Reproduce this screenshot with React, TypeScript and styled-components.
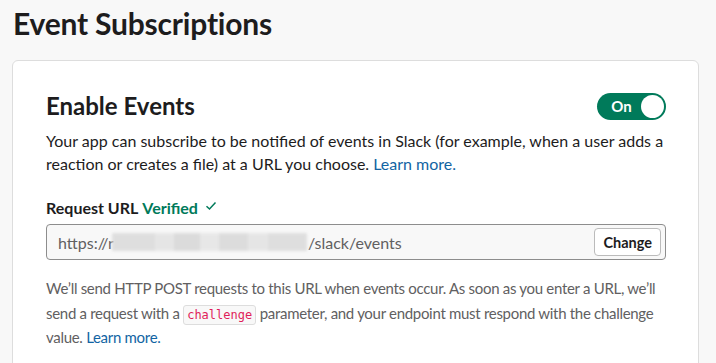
import React from "react";
import styled, { createGlobalStyle } from "styled-components";

const Global = createGlobalStyle`
  html, body { margin: 0; padding: 0; background: #f8f8f8; }
  body { font-family: Lato, "Noto Sans", sans-serif; color: #1d1c1d; -webkit-font-smoothing: antialiased; }
`;

const Page = styled.div`
  padding: 0 17px 0 12px;
  width: 716px;
  box-sizing: border-box;
  height: 363px;
  overflow: hidden;
`;

const Title = styled.h1`
  margin: 0;
  padding: 3px 0 0 1px;
  font-size: 30px;
  line-height: 40px;
  font-weight: 700;
  letter-spacing: -0.2px;
  color: #1d1c1d;
`;

const Card = styled.section`
  margin-top: 17px;
  background: #fff;
  border: 1px solid #dddddd;
  border-radius: 6px;
  padding: 29px 32px 40px 33px;
`;

const HeaderRow = styled.div`
  display: flex;
  align-items: center;
  justify-content: space-between;
`;

const CardTitle = styled.h2`
  margin: 0;
  font-size: 24px;
  line-height: 32px;
  font-weight: 700;
`;

const Toggle = styled.div`
  width: 69px;
  height: 27px;
  border-radius: 14px;
  background: #007a5a;
  display: flex;
  align-items: center;
  box-sizing: border-box;
  padding: 0 2px 0 0;
`;

const ToggleLabel = styled.span`
  flex: 1;
  text-align: center;
  color: #fff;
  font-weight: 700;
  font-size: 15px;
  padding-left: 5px;
`;

const Knob = styled.span`
  width: 23px;
  height: 23px;
  border-radius: 50%;
  background: #fff;
`;

const Desc = styled.p`
  margin: 7px 0 0;
  font-size: 16px;
  line-height: 23px;
`;

const Link = styled.a`
  color: #1264a3;
  text-decoration: none;
`;

const Label = styled.div`
  margin-top: 23px;
  font-size: 16px;
  font-weight: 700;
  line-height: 20px;
  display: flex;
  align-items: center;
  gap: 4px;
`;

const Verified = styled.span`
  color: #007a5a;
`;

const Check = styled.svg`
  margin-left: 3px;
  margin-top: -5px;
`;

const UrlBox = styled.div`
  margin-top: 6px;
  height: 36px;
  box-sizing: border-box;
  border: 1px solid #8d8d8d;
  border-radius: 4px;
  background: #f8f8f8;
  display: flex;
  align-items: center;
  padding: 0 4px 0 11px;
`;

const UrlText = styled.span`
  flex: 1;
  display: flex;
  align-items: center;
  font-size: 16px;
  color: #616061;
`;

const Blur = styled.span`
  display: inline-block;
  width: 195px;
  height: 18px;
  margin: 0 1px 0 -2px;
  background:
    linear-gradient(90deg, #dcdcdc 0 22%, #e4e4e4 22% 32%, #d8d8d8 32% 45%, #e6e6e6 45% 55%, #dadada 55% 70%, #e4e4e4 70% 80%, #dcdcdc 80% 100%);
  filter: blur(1.5px);
  opacity: 0.9;
`;

const ChangeButton = styled.button`
  height: 28px;
  padding: 0 8px;
  border: 1px solid #bbbbbb;
  border-radius: 4px;
  background: #fff;
  font-family: inherit;
  font-weight: 700;
  font-size: 14.5px;
  color: #1d1c1d;
`;

const Help = styled.p`
  margin: 16px 0 0;
  font-size: 15px;
  letter-spacing: -0.3px;
  line-height: 24.5px;
  color: #616061;
`;

const Code = styled.code`
  display: inline-block;
  font-family: Monaco, Menlo, "DejaVu Sans Mono", monospace;
  font-size: 12px;
  letter-spacing: 0;
  line-height: 16px;
  color: #e01e5a;
  background: #f8f8f8;
  border: 1px solid #dddddd;
  border-radius: 3px;
  padding: 1px 3px;
`;

export default function App() {
  return (
    <>
      <Global />
      <Page>
        <Title>Event Subscriptions</Title>
        <Card>
          <HeaderRow>
            <CardTitle>Enable Events</CardTitle>
            <Toggle>
              <ToggleLabel>On</ToggleLabel>
              <Knob />
            </Toggle>
          </HeaderRow>
          <Desc>
            Your app can subscribe to be notified of events in Slack (for example, when a user adds a
            reaction or creates a file) at a URL you choose. <Link href="#">Learn more.</Link>
          </Desc>
          <Label>
            Request URL <Verified>Verified</Verified>
            <Check width="12" height="10" viewBox="0 0 12 10">
              <path d="M1.5 5.2 L4.5 8 L10.5 1.5" fill="none" stroke="#007a5a" strokeWidth="1.5" />
            </Check>
          </Label>
          <UrlBox>
            <UrlText>
              https://r<Blur />/slack/events
            </UrlText>
            <ChangeButton>Change</ChangeButton>
          </UrlBox>
          <Help>
            We’ll send HTTP POST requests to this URL when events occur. As soon as you enter a URL, we’ll
            send a request with a <Code>challenge</Code> parameter, and your endpoint must respond with the challenge
            value. <Link href="#">Learn more.</Link>
          </Help>
        </Card>
      </Page>
    </>
  );
}
